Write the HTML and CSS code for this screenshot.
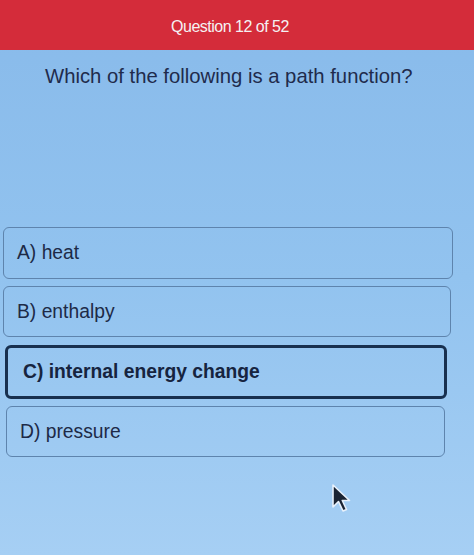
FILE: index.html
```html
<!DOCTYPE html>
<html>
<head>
<meta charset="utf-8">
<link rel="stylesheet" href="styles.css">
</head>
<body>
<div class="page">
  <header class="top">Question 12 of 52</header>
  <main class="content">
    <h1 class="question">Which of the following is a path function?</h1>
    <div class="options">
      <div class="option opt-a">A) heat</div>
      <div class="option opt-b">B) enthalpy</div>
      <div class="option opt-c selected">C) internal energy change</div>
      <div class="option opt-d">D) pressure</div>
    </div>
  </main>
  <svg class="cursor" width="22" height="32" viewBox="0 0 22 32">
    <path d="M2 2 L2 24 L7.5 18.5 L12 28 L15.5 26.5 L11.3 17.5 L18.5 17.5 Z" fill="#1b2433" stroke="#e8f1fb" stroke-width="1.6" stroke-linejoin="round"/>
  </svg>
</div>
</body>
</html>
```
FILE: styles.css
```css
html, body {
  margin: 0;
  padding: 0;
}
body {
  width: 474px;
  height: 555px;
  overflow: hidden;
  font-family: "Liberation Sans", Arial, sans-serif;
}
.page {
  position: relative;
  width: 474px;
  height: 555px;
  display: flex;
  flex-direction: column;
  background: linear-gradient(180deg, #88baea 0%, #92c3ef 50%, #a6cff4 100%);
}
.top {
  height: 50px;
  flex: none;
  background: #d42c3a;
  color: #f4f1f3;
  font-size: 16px;
  display: flex;
  align-items: center;
  justify-content: center;
  padding-right: 14px;
  padding-top: 4px;
  box-sizing: border-box;
  letter-spacing: -0.5px;
}
.content {
  display: flex;
  flex-direction: column;
}
.question {
  margin: 13px 0 0 45px;
  font-size: 20.3px;
  line-height: 26px;
  font-weight: normal;
  color: #1f2b4c;
}
.options {
  margin-top: 138px;
  display: flex;
  flex-direction: column;
  gap: 7px;
}
.option {
  height: 52px;
  box-sizing: border-box;
  border: 1.5px solid #5e84ad;
  border-radius: 6px;
  display: flex;
  align-items: center;
  padding-left: 13px;
  font-size: 19.3px;
  color: #1d2a47;
}
.opt-a { margin: 0 21px 0 3px; }
.opt-b { margin: 0 23px 0 3px; height: 51px; }
.opt-c { margin: 1px 27px 0 5px; height: 54px; }
.opt-d { margin: 0 29px 0 6px; height: 51px; }
.selected {
  border: 3px solid #18304f;
  font-weight: bold;
  padding-left: 15px;
  color: #16243f;
}
.cursor {
  position: absolute;
  left: 331px;
  top: 483px;
}
```
